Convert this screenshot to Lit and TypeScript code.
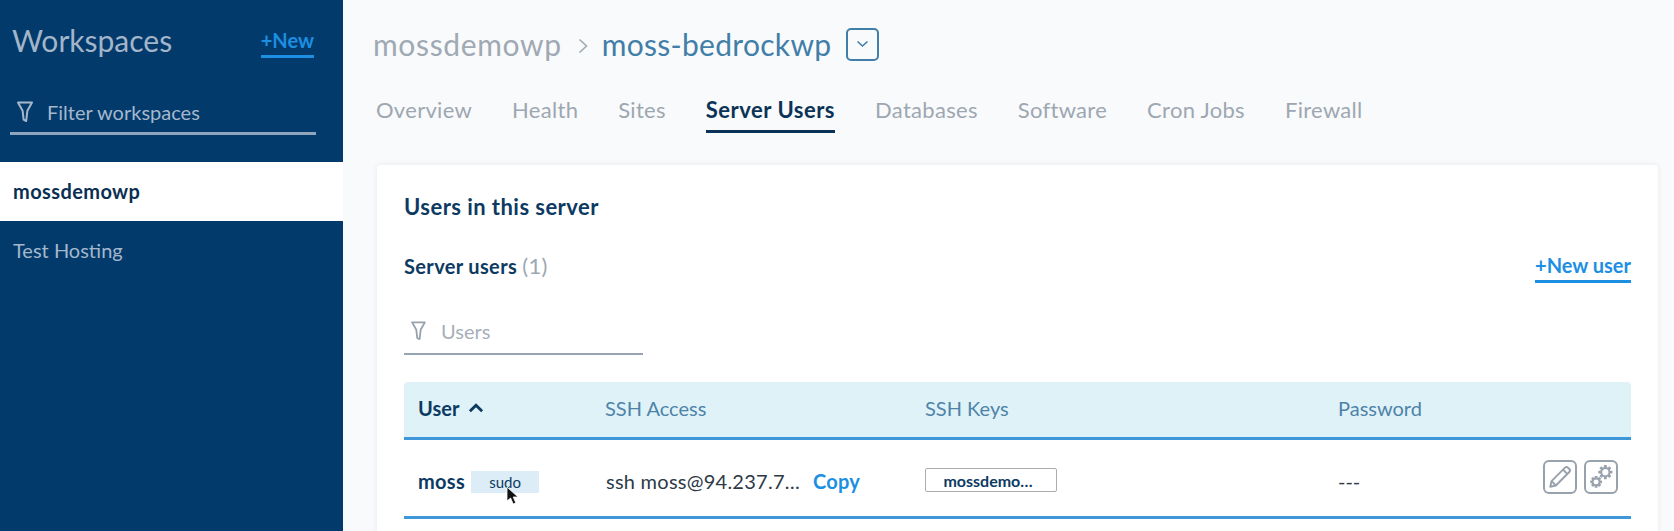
import { LitElement, html, css, svg } from "lit";
import { customElement } from "lit/decorators.js";

const funnel = (cls: string) => html`<svg class=${cls} viewBox="0 0 16 22" fill="none" stroke="currentColor" stroke-width="2" stroke-linejoin="round"><path d="M1 1.5h14l-4.6 8.2-1.2 10.3-2.6-1.4-1-8.9z"/></svg>`;

const gear = (cx: number, cy: number, r: number) => {
  const teeth = [];
  for (let i = 0; i < 8; i++) {
    const a = (i * Math.PI) / 4;
    teeth.push(`M${(cx + Math.cos(a) * r).toFixed(1)} ${(cy + Math.sin(a) * r).toFixed(1)}L${(cx + Math.cos(a) * r * 1.7).toFixed(1)} ${(cy + Math.sin(a) * r * 1.7).toFixed(1)}`);
  }
  return svg`<circle cx=${cx} cy=${cy} r=${r} fill="none"/><path d=${teeth.join("")} stroke-width="2.6"/>`;
};

@customElement("app-root")
export class AppRoot extends LitElement {
  static styles = css`
    :host { display: block; width: 1674px; height: 531px; overflow: hidden; font-family: "Lato", "Noto Sans", sans-serif; background: #f9fafb; }
    .page { display: flex; height: 531px; }
    .side { width: 343px; flex: none; background: #013a6b; color: #a5b7cb; box-sizing: border-box; padding-top: 20px; }
    .side-head { display: flex; justify-content: space-between; align-items: flex-start; padding: 0 29px 0 12px; }
    .side-title { font-size: 30px; line-height: 40px; color: #a3b5c9; }
    .new { font-size: 20px; font-weight: 700; color: #1c8fe3; line-height: 27px; border-bottom: 3px solid #1c8fe3; margin-top: 7px; padding-bottom: 1px; }
    .side-filter { display: flex; align-items: center; gap: 14px; margin: 38px 27px 0 10px; padding: 0 0 7px 7px; height: 27px; border-bottom: 3px solid #8fa5bc; font-size: 20px; color: #a5b7cb; }
    .fn { width: 16px; height: 22px; flex: none; }
    .side-list { margin-top: 27px; }
    .side-item { height: 59px; box-sizing: border-box; padding: 0 0 2px 13px; display: flex; align-items: center; font-size: 20px; }
    .side-item.on { background: #fff; color: #0b2f52; font-weight: 700; letter-spacing: .4px; }

    .main { flex: 1; min-width: 0; padding: 0 16px 0 34px; }
    .crumbs { display: flex; align-items: center; height: 90px; margin-left: -4px; font-size: 30px; box-sizing: border-box; padding-bottom: 2px; }
    .c1 { color: #9fa9b4; letter-spacing: .65px; }
    .sep { width: 10px; height: 16px; margin: 4px 14px 0 16px; color: #9fa9b4; }
    .c2 { color: #417ea8; letter-spacing: .3px; }
    .drop { width: 33px; height: 33px; margin-left: 15px; box-sizing: border-box; border: 2px solid #417ea8; border-radius: 5px; display: flex; align-items: center; justify-content: center; color: #417ea8; }
    .tabs { display: flex; gap: 40px; margin-left: -1px; font-size: 22px; color: #9da7b2; height: 75px; box-sizing: border-box; letter-spacing: .3px; }
    .tab { height: 43px; line-height: 40px; box-sizing: border-box; }
    .tab.on { color: #0b3358; font-weight: 700; border-bottom: 3px solid #0b3358; letter-spacing: .5px; }

    .card { background: #fff; border-radius: 4px; box-shadow: 0 0 6px rgba(0,0,0,.07); height: 400px; padding: 28px 27px 0 27px; }
    h2 { margin: 0; font-size: 22px; line-height: 28px; font-weight: 700; color: #0c3a62; letter-spacing: .45px; }
    .sub { display: flex; justify-content: space-between; align-items: flex-start; margin-top: 31px; }
    .sub-l { font-size: 20px; line-height: 27px; font-weight: 700; color: #0c3a62; letter-spacing: .35px; }
    .sub-l span { font-weight: 400; color: #9da7b2; font-size: 22px; }
    .new-user { font-size: 20px; line-height: 27px; font-weight: 700; color: #1c8fe3; border-bottom: 3px solid #1c8fe3; padding-bottom: 1px; }
    .ufilter { display: flex; align-items: center; gap: 15px; width: 239px; box-sizing: border-box; height: 44px; margin-top: 28px; padding: 0 0 2px 7px; border-bottom: 2px solid #95a3b3; color: #a7afb9; font-size: 20px; }
    .ufilter .fn { width: 15px; height: 20px; color: #98a2ad; }
    .table { margin-top: 27px; }
    .row { display: grid; grid-template-columns: 187px 320px 413px 1fr; padding-left: 14px; align-items: center; }
    .thead { height: 58px; box-sizing: border-box; padding-bottom: 3px; background: #dff2f8; border-radius: 4px 4px 0 0; border-bottom: 3px solid #3d97d8; font-size: 20px; color: #4e83a8; }
    .thead .u { display: flex; align-items: center; gap: 9px; color: #0c3a62; font-weight: 700; }
    .tbody { height: 79px; box-sizing: border-box; padding-top: 6px; border-bottom: 3px solid #3d97d8; font-size: 20px; color: #2d3a46; }
    .user { display: flex; align-items: center; gap: 6px; font-weight: 700; color: #0c3a62; position: relative; letter-spacing: .3px; }
    .pill { width: 68px; height: 22px; margin-top: 2px; background: #dcedf8; color: #0c3a62; font-size: 15px; font-weight: 400; display: flex; align-items: center; justify-content: center; letter-spacing: 0; }
    .cursor { position: absolute; left: 88px; top: 17px; width: 14px; height: 20px; }
    .ssh { display: flex; align-items: center; gap: 13px; color: #2d3a46; padding-left: 1px; letter-spacing: .25px; }
    .copy { color: #1c8fe3; font-weight: 700; }
    .key { width: 132px; height: 24px; margin-top: -2px; box-sizing: border-box; border: 1px solid #a9adb2; border-radius: 2px; padding-right: 6px; display: flex; align-items: center; justify-content: center; font-size: 16px; font-weight: 700; color: #0c3a62; }
    .last { display: flex; justify-content: space-between; align-items: center; padding-right: 13px; }
    .acts { display: flex; gap: 7px; margin-top: -8px; }
    .act { width: 34px; height: 34px; box-sizing: border-box; border: 2px solid #98a2ad; border-radius: 6px; display: flex; align-items: center; justify-content: center; color: #98a2ad; }
    .act svg { width: 26px; height: 26px; }
  `;

  render() {
    const tabs = ["Overview", "Health", "Sites", "Server Users", "Databases", "Software", "Cron Jobs", "Firewall"];
    return html`<div class="page">
      <aside class="side">
        <div class="side-head"><div class="side-title">Workspaces</div><div class="new">+New</div></div>
        <div class="side-filter">${funnel("fn")}<span>Filter workspaces</span></div>
        <div class="side-list">
          <div class="side-item on">mossdemowp</div>
          <div class="side-item">Test Hosting</div>
        </div>
      </aside>
      <main class="main">
        <div class="crumbs">
          <span class="c1">mossdemowp</span>
          <svg class="sep" viewBox="0 0 10 16" fill="none" stroke="currentColor" stroke-width="1.6"><path d="M1.5 1.5 8.5 8l-7 6.5"/></svg>
          <span class="c2">moss-bedrockwp</span>
          <div class="drop"><svg width="13" height="8" viewBox="0 0 13 8" fill="none" stroke="currentColor" stroke-width="1.6"><path d="M1.5 1.5 6.5 6l5-4.5"/></svg></div>
        </div>
        <nav class="tabs">${tabs.map((t) => html`<div class="tab ${t === "Server Users" ? "on" : ""}">${t}</div>`)}</nav>
        <section class="card">
          <h2>Users in this server</h2>
          <div class="sub"><div class="sub-l">Server users <span>(1)</span></div><div class="new-user">+New user</div></div>
          <div class="ufilter">${funnel("fn")}<span>Users</span></div>
          <div class="table">
            <div class="row thead">
              <div class="u">User <svg width="16" height="10" viewBox="0 0 14 9" fill="none" stroke="currentColor" stroke-width="2.6"><path d="M1.5 7.5 7 2l5.5 5.5"/></svg></div>
              <div>SSH Access</div><div>SSH Keys</div><div>Password</div>
            </div>
            <div class="row tbody">
              <div class="user">moss <span class="pill">sudo</span>
                <svg class="cursor" viewBox="0 0 14 20"><path d="M1 1v14l3.6-3 2.6 6 2.6-1.2-2.6-5.8H12z" fill="#111" stroke="#fff" stroke-width=".8"/></svg>
              </div>
              <div class="ssh"><span>ssh moss@94.237.7…</span><span class="copy">Copy</span></div>
              <div><div class="key">mossdemo…</div></div>
              <div class="last"><span>---</span>
                <div class="acts">
                  <div class="act"><svg viewBox="0 0 24 24" fill="none" stroke="currentColor" stroke-width="1.8" stroke-linejoin="round"><path d="M3 21l1.2-5.2L16.6 3.4a2 2 0 0 1 2.8 0l1.2 1.2a2 2 0 0 1 0 2.8L8.2 19.8z"/><path d="M14.8 5.2l4 4M4.2 15.8l4 4"/></svg></div>
                  <div class="act"><svg viewBox="0 0 24 24" stroke="currentColor" stroke-width="1.8">${gear(7.5, 16.5, 3.2)}${gear(16, 7.5, 3.8)}</svg></div>
                </div>
              </div>
            </div>
          </div>
        </section>
      </main>
    </div>`;
  }
}
